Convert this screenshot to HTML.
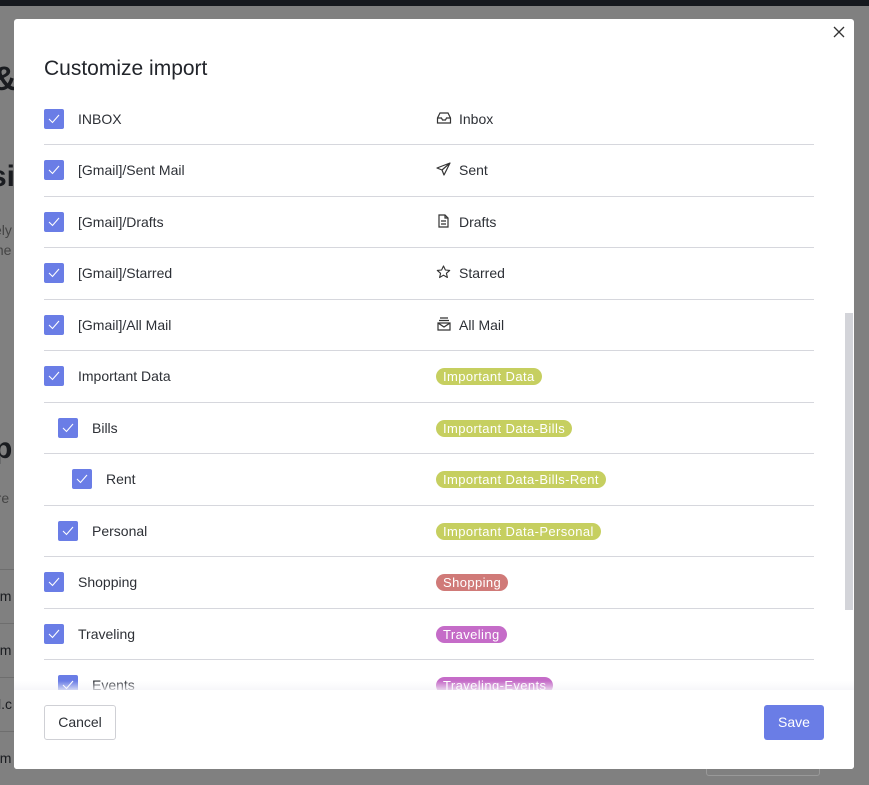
<!DOCTYPE html>
<html><head><meta charset="utf-8"><style>
*{margin:0;padding:0;box-sizing:border-box}
body{width:869px;height:785px;overflow:hidden;background:#808080;font-family:"Liberation Sans",sans-serif;position:relative}
.top{position:absolute;left:0;top:0;width:869px;height:6px;background:#16191e}
.bg{position:absolute;color:#1a1c20;white-space:nowrap}
.bl{position:absolute;left:0;width:14px;height:1px;background:#6e6e6e}
.modal{position:absolute;left:14px;top:19px;width:840px;height:750px;background:#fff;border-radius:3px;overflow:hidden}
h1{position:absolute;left:30px;top:38px;font-size:21px;font-weight:normal;color:#22252b}
.x{position:absolute;left:818px;top:6px}
.row{position:absolute;left:30px;width:770px;height:51.5px;border-bottom:1px solid #d6d7dd}
.cb{position:absolute;top:15px;width:20px;height:20px;background:#6a7de6;border-radius:2px}
.cb svg{position:absolute;left:4px;top:5px}
.lbl{position:absolute;top:17px;font-size:14px;color:#2d3036}
.r{position:absolute;left:392px;top:17px;font-size:14px;color:#2d3036}
.r svg{position:absolute;left:0;top:0px}
.r span{position:absolute;left:23px;white-space:nowrap}
.badge{position:absolute;left:392px;top:17px;height:17px;border-radius:9px;color:#fff;font-size:13px;line-height:17px;padding:0 7px;white-space:nowrap;letter-spacing:0.4px}
.g{background:#c6cf60}
.fade{position:absolute;left:0;width:840px;height:14px}
.sbt{position:absolute;left:831px;top:294px;width:8px;height:297px;background:#d3d4d9}
.btn{position:absolute;top:686px;height:35px;border-radius:3px;font-size:14px;line-height:33px;text-align:center}
</style></head><body>
<div class="top"></div>
<div class="bg" style="left:-8px;top:60px;font-size:34px;font-weight:bold">&amp;</div>
<div class="bg" style="left:-10px;top:160px;font-size:30px;font-weight:bold">si</div>
<div class="bg" style="left:-6px;top:222px;font-size:14px;color:#444">ely</div>
<div class="bg" style="left:-8px;top:242px;font-size:14px;color:#444">me</div>
<div class="bg" style="left:-6px;top:432px;font-size:30px;font-weight:bold">p</div>
<div class="bg" style="left:-8px;top:490px;font-size:14px;color:#444">rre</div>
<div class="bl" style="top:569px"></div><div class="bl" style="top:623px"></div><div class="bl" style="top:677px"></div><div class="bl" style="top:731px"></div>
<div class="bg" style="left:-8px;top:588px;font-size:14px">gm</div>
<div class="bg" style="left:-8px;top:642px;font-size:14px">gm</div>
<div class="bg" style="left:-2px;top:696px;font-size:14px">l.c</div>
<div class="bg" style="left:-8px;top:750px;font-size:14px">gm</div>
<div style="position:absolute;left:706px;top:740px;width:114px;height:36px;border:1px solid #999;border-radius:3px"></div>

<div class="modal">
<h1>Customize import</h1>
<svg class="x" width="14" height="14" viewBox="0 0 14 14"><path d="M2 2L12 12M12 2L2 12" stroke="#333" stroke-width="1.3"/></svg>

<div class="sbt"></div>

<div class="row" style="top:74.5px"><div class="cb" style="left:0"><svg width="12" height="10"><path d="M1 5l3.5 3.5L11 1" stroke="#fff" fill="none" stroke-width="1.1"/></svg></div><div class="lbl" style="left:34px">INBOX</div>
<div class="r"><svg width="16" height="14" viewBox="0 0 16 14"><path d="M1.5 7v5h13V7L12 2H4zM1.5 7h4l1 2h3l1-2h4" fill="none" stroke="#333" stroke-width="1.2"/></svg><span>Inbox</span></div></div>

<div class="row" style="top:126px"><div class="cb" style="left:0"><svg width="12" height="10"><path d="M1 5l3.5 3.5L11 1" stroke="#fff" fill="none" stroke-width="1.1"/></svg></div><div class="lbl" style="left:34px">[Gmail]/Sent Mail</div>
<div class="r"><svg width="16" height="14" viewBox="0 0 16 14"><path d="M14 1L1 6l5 2 2 5zM6 8l8-7" fill="none" stroke="#333" stroke-width="1.2" stroke-linejoin="round"/></svg><span>Sent</span></div></div>

<div class="row" style="top:177.5px"><div class="cb" style="left:0"><svg width="12" height="10"><path d="M1 5l3.5 3.5L11 1" stroke="#fff" fill="none" stroke-width="1.1"/></svg></div><div class="lbl" style="left:34px">[Gmail]/Drafts</div>
<div class="r"><svg width="16" height="14" viewBox="0 0 16 14"><path d="M3 1h6l3 3v9H3zM9 1v3h3M5 7h5M5 10h5" fill="none" stroke="#333" stroke-width="1.2"/></svg><span>Drafts</span></div></div>

<div class="row" style="top:229px"><div class="cb" style="left:0"><svg width="12" height="10"><path d="M1 5l3.5 3.5L11 1" stroke="#fff" fill="none" stroke-width="1.1"/></svg></div><div class="lbl" style="left:34px">[Gmail]/Starred</div>
<div class="r"><svg width="16" height="14" viewBox="0 0 16 14"><path d="M7.5 1l1.9 4 4.3.4-3.3 2.9 1 4.2-3.9-2.3-3.9 2.3 1-4.2L1.3 5.4 5.6 5z" fill="none" stroke="#333" stroke-width="1.1" stroke-linejoin="round"/></svg><span>Starred</span></div></div>

<div class="row" style="top:280.5px"><div class="cb" style="left:0"><svg width="12" height="10"><path d="M1 5l3.5 3.5L11 1" stroke="#fff" fill="none" stroke-width="1.1"/></svg></div><div class="lbl" style="left:34px">[Gmail]/All Mail</div>
<div class="r"><svg width="16" height="14" viewBox="0 0 16 14"><path d="M4 1h8M3 3.5h10M2 6h12v7H2zM2 6l6 4 6-4" fill="none" stroke="#333" stroke-width="1.2"/></svg><span>All Mail</span></div></div>

<div class="row" style="top:332px"><div class="cb" style="left:0"><svg width="12" height="10"><path d="M1 5l3.5 3.5L11 1" stroke="#fff" fill="none" stroke-width="1.1"/></svg></div><div class="lbl" style="left:34px">Important Data</div><div class="badge g">Important Data</div></div>

<div class="row" style="top:383.5px"><div class="cb" style="left:14px"><svg width="12" height="10"><path d="M1 5l3.5 3.5L11 1" stroke="#fff" fill="none" stroke-width="1.1"/></svg></div><div class="lbl" style="left:48px">Bills</div><div class="badge g">Important Data-Bills</div></div>

<div class="row" style="top:435px"><div class="cb" style="left:28px"><svg width="12" height="10"><path d="M1 5l3.5 3.5L11 1" stroke="#fff" fill="none" stroke-width="1.1"/></svg></div><div class="lbl" style="left:62px">Rent</div><div class="badge g">Important Data-Bills-Rent</div></div>

<div class="row" style="top:486.5px"><div class="cb" style="left:14px"><svg width="12" height="10"><path d="M1 5l3.5 3.5L11 1" stroke="#fff" fill="none" stroke-width="1.1"/></svg></div><div class="lbl" style="left:48px">Personal</div><div class="badge g">Important Data-Personal</div></div>

<div class="row" style="top:538px"><div class="cb" style="left:0"><svg width="12" height="10"><path d="M1 5l3.5 3.5L11 1" stroke="#fff" fill="none" stroke-width="1.1"/></svg></div><div class="lbl" style="left:34px">Shopping</div><div class="badge" style="background:#d07a78">Shopping</div></div>

<div class="row" style="top:589.5px"><div class="cb" style="left:0"><svg width="12" height="10"><path d="M1 5l3.5 3.5L11 1" stroke="#fff" fill="none" stroke-width="1.1"/></svg></div><div class="lbl" style="left:34px">Traveling</div><div class="badge" style="background:#c56cc8">Traveling</div></div>

<div class="row" style="top:641px;border:none"><div class="cb" style="left:14px"><svg width="12" height="10"><path d="M1 5l3.5 3.5L11 1" stroke="#fff" fill="none" stroke-width="1.1"/></svg></div><div class="lbl" style="left:48px">Events</div><div class="badge" style="background:#c56cc8">Traveling-Events</div></div>

<div class="fade" style="top:70px;background:linear-gradient(#fff,rgba(255,255,255,0))"></div>
<div class="fade" style="top:662px;height:12px;background:linear-gradient(rgba(255,255,255,0),#f4f4f8)"></div>
<div style="position:absolute;left:0;top:671px;width:840px;height:80px;background:#fff"></div>

<div class="btn" style="left:30px;width:72px;border:1px solid #cfd0d5;color:#2d3036">Cancel</div>
<div class="btn" style="left:750px;width:60px;background:#6a7de6;color:#fff;line-height:35px">Save</div>
</div>
</body></html>
